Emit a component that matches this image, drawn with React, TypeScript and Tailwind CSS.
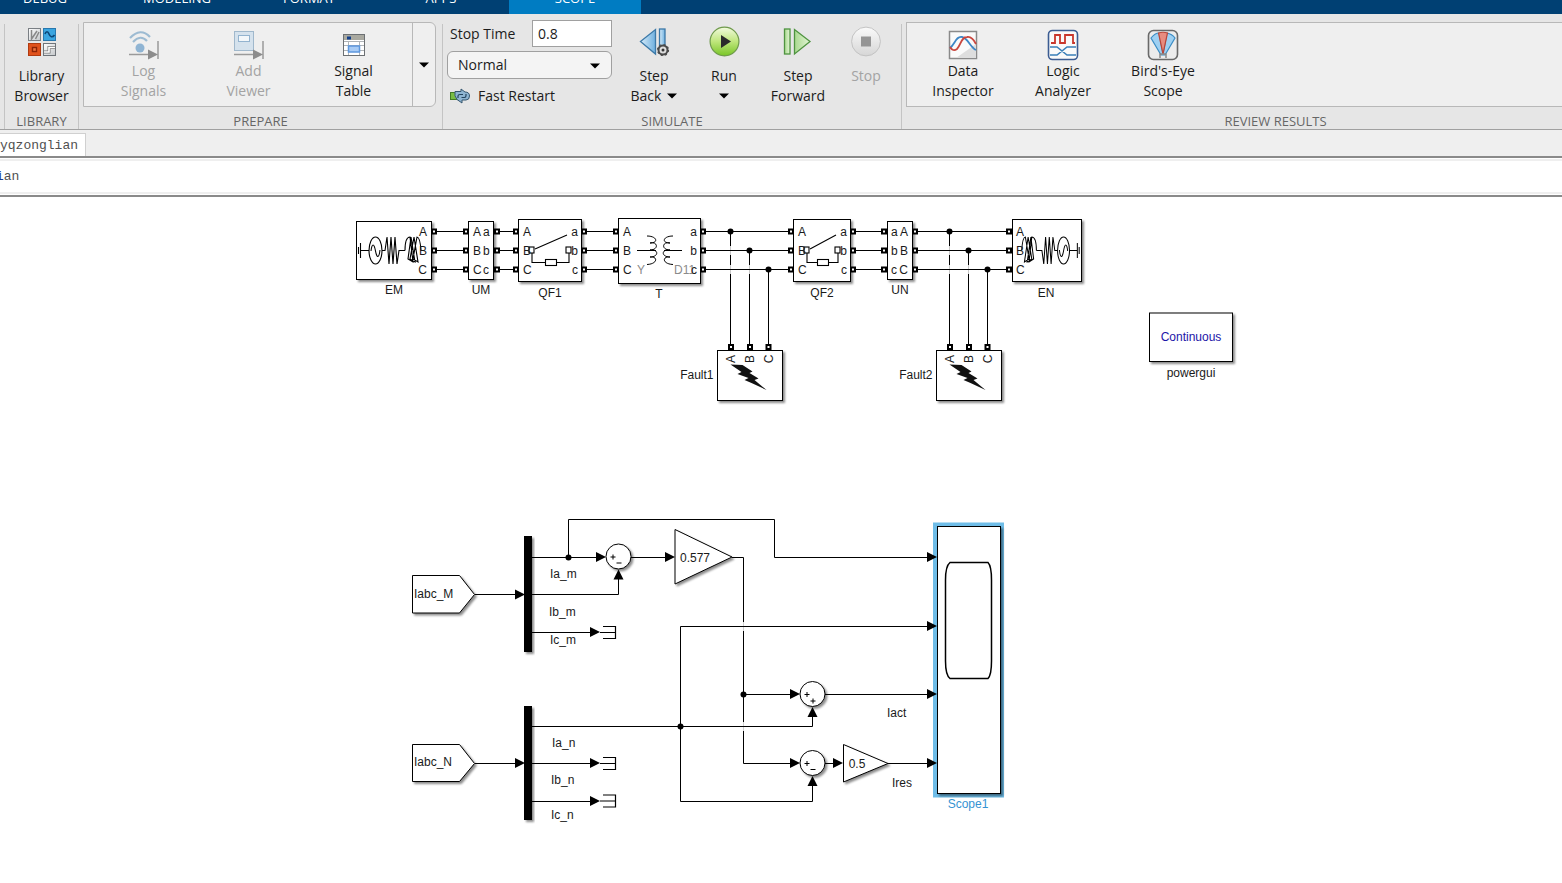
import { useState } from 'react';
import type { ReactNode } from 'react';

const TABS = ['DEBUG', 'MODELING', 'FORMAT', 'APPS', 'SCOPE'];

export default function App() {
  const [activeTab, setActiveTab] = useState('SCOPE');
  const [stopTime, setStopTime] = useState('0.8');
  const [mode, setMode] = useState('Normal');

  return (
    <div className="min-h-screen flex flex-col overflow-hidden bg-white font-['Open_Sans',sans-serif] text-sm leading-5 text-[#1c1c1c]">
      {/* Ribbon tabs */}
      <nav className="h-[14px] bg-[#004073] overflow-hidden flex items-end">
        <div className="flex -ml-[21px]">
          {TABS.map((tab) => (
            <button
              key={tab}
              onClick={() => setActiveTab(tab)}
              className={`h-8 pb-[6px] text-[13px] leading-5 text-white flex items-end justify-center ${
                activeTab === tab ? 'w-[132px] ml-[2px] bg-[#007cc2]' : 'w-[132px]'
              }`}
            >
              {tab}
            </button>
          ))}
        </div>
      </nav>

      {/* Toolstrip */}
      <header className="h-[116px] bg-[#e6e6e6] border-b border-[#a0a0a0] overflow-hidden flex">
        <div className="w-1 shrink-0" />
        <Divider />
        <Section title="LIBRARY" width="w-[73px]">
          <ToolButton icon={<LibraryIcon />} lines={['Library', 'Browser']} className="w-full pt-3" gap />
        </Section>

        <Divider />
        <Section title="PREPARE" width="w-[363px]">
          <div className="mt-2 ml-1 mr-[6px] h-[85px] flex border border-[#b8b8b8] rounded-r-md bg-[#efefef]">
            <div className="flex pl-[7px] pr-[6px] border-r border-[#b8b8b8]">
              <ToolButton icon={<LogIcon />} lines={['Log', 'Signals']} className="w-[105px] pt-[6px]" disabled />
              <ToolButton icon={<ViewerIcon />} lines={['Add', 'Viewer']} className="w-[105px] pt-[6px]" disabled />
              <ToolButton icon={<TableIcon />} lines={['Signal', 'Table']} className="w-[105px] pt-[6px]" />
            </div>
            <button aria-label="More tools" className="flex-1 flex items-center justify-center">
              <Caret />
            </button>
          </div>
        </Section>

        <Divider />
        <Section title="SIMULATE" width="w-[458px]">
          <div className="flex pl-1">
            <div className="w-[165px] pt-[6px] flex flex-col">
              <div className="flex items-center justify-between">
                <label htmlFor="stop-time" className="pl-[3px]">Stop Time</label>
                <input
                  id="stop-time"
                  value={stopTime}
                  onChange={(e) => setStopTime(e.target.value)}
                  className="w-20 h-[27px] px-[5px] bg-white border border-[#a0a0a0]"
                />
              </div>
              <div className="relative mt-1">
                <select
                  aria-label="Simulation mode"
                  value={mode}
                  onChange={(e) => setMode(e.target.value)}
                  className="appearance-none w-full h-7 pl-[10px] bg-[#f4f4f4] border border-[#a0a0a0] rounded-md"
                >
                  <option>Normal</option>
                  <option>Accelerator</option>
                  <option>Rapid Accelerator</option>
                </select>
                <span className="absolute right-3 top-3 pointer-events-none">
                  <Caret />
                </span>
              </div>
              <button className="mt-[7px] pl-[3px] flex items-center gap-2">
                <FastRestartIcon />
                Fast Restart
              </button>
            </div>
            <ToolButton icon={<StepBackIcon />} lines={['Step', 'Back']} className="ml-[7px] w-[70px] pt-3" gap caret />
            <ToolButton icon={<RunIcon />} lines={['Run', '']} className="w-[70px] pt-3" gap caret />
            <ToolButton icon={<StepForwardIcon />} lines={['Step', 'Forward']} className="w-[78px] pt-3" gap />
            <ToolButton icon={<StopIcon />} lines={['Stop']} className="w-[58px] pt-3" gap disabled />
          </div>
        </Section>

        <Divider />
        <Section title="REVIEW RESULTS" width="w-[747px]">
          <div className="mt-2 mx-1 h-[85px] px-[6px] flex border border-[#b8b8b8] bg-[#efefef]">
            <ToolButton icon={<InspectorIcon />} lines={['Data', 'Inspector']} className="w-[100px] pt-[6px]" />
            <ToolButton icon={<LogicIcon />} lines={['Logic', 'Analyzer']} className="w-[100px] pt-[6px]" />
            <ToolButton icon={<BirdsEyeIcon />} lines={["Bird's-Eye", 'Scope']} className="w-[100px] pt-[6px]" />
          </div>
        </Section>
      </header>

      {/* Model tab and breadcrumb */}
      <div className="h-7 pt-[3px] bg-[#efefef] border-b-2 border-[#8a8a8a] flex font-['Liberation_Mono',monospace] text-[13px] text-[#505050]">
        <button className="w-[86px] pt-[2px] bg-white border-r border-t border-[#d0d0d0] text-left">yqzonglian</button>
      </div>
      <div className="h-[39px] pt-px bg-white border-b-2 border-[#8a8a8a] font-['Liberation_Mono',monospace] text-[13px] text-[#505050]">
        <div className="h-[35px] border-y-2 border-[#efefef] flex items-center">
          <span className="-ml-1"><span className="text-[#1b3d8c]">i</span>an</span>
        </div>
      </div>

      <main className="flex-1 overflow-hidden">
        <Diagram />
      </main>
    </div>
  );
}

function Divider() {
  return <div className="w-px shrink-0 mt-[10px] bg-[#c4c4c4]" />;
}

function Section({ title, width, children }: { title: string; width: string; children: ReactNode }) {
  return (
    <section className={`${width} shrink-0 flex flex-col`}>
      <div className="flex-1">{children}</div>
      <h2 className="h-4 text-center text-[13px] leading-4 text-[#666]">{title}</h2>
    </section>
  );
}

interface ToolButtonProps {
  icon: ReactNode;
  lines: string[];
  className: string;
  gap?: boolean;
  disabled?: boolean;
  caret?: boolean;
}

function ToolButton({ icon, lines, className, gap, disabled, caret }: ToolButtonProps) {
  return (
    <button
      disabled={disabled}
      className={`flex flex-col items-center justify-start ${className} ${disabled ? 'text-[#a3a3a3]' : ''}`}
    >
      <span className={`h-8 flex items-center justify-center ${gap ? 'mb-2' : ''}`}>{icon}</span>
      {lines.map((line, i) => (
        <span key={i} className="h-5 flex items-center gap-[6px] whitespace-nowrap">
          {line}
          {caret && i === lines.length - 1 && <Caret />}
        </span>
      ))}
    </button>
  );
}

/* ---------- Toolstrip icons ---------- */

function Caret() {
  return (
    <svg width="10" height="6" viewBox="0 0 10 6" className="block">
      <path d="M0 0.5H10L5 5.5Z" fill="#000" />
    </svg>
  );
}

function LibraryIcon() {
  return (
    <svg width="30" height="30" viewBox="0 0 30 30" fill="none">
      <defs>
        <linearGradient id="tileGray" x1="0" y1="0" x2="1" y2="1">
          <stop offset="0" stopColor="#fff" />
          <stop offset="1" stopColor="#c4c7ca" />
        </linearGradient>
      </defs>
      <rect x="1.5" y="1.5" width="12" height="12" fill="url(#tileGray)" stroke="#7a7f84" />
      <path d="M4.500 3V12L10 4M8.500 12L12 5" stroke="#888" strokeWidth="1.5" />
      <rect x="16.5" y="1.5" width="12" height="12" fill="#3aa5e0" stroke="#2878ae" />
      <path d="M18 7C19 4 21 4 22 7S25.5 11 27.500 8" stroke="#0b4778" strokeWidth="1.6" />
      <rect x="1.5" y="16.5" width="12" height="12" fill="#e0521c" stroke="#b03a10" />
      <rect x="5.5" y="20.5" width="4" height="4" fill="#ef7440" stroke="#8c2406" strokeWidth="1.4" />
      <rect x="16.5" y="16.5" width="12" height="12" fill="url(#tileGray)" stroke="#6f7479" />
      <path d="M17 25H22V20.500H28" stroke="#777" strokeWidth="3" />
      <path d="M17 25H22V20.500H28" stroke="#fff" strokeWidth="1.6" />
    </svg>
  );
}

function LogIcon() {
  return (
    <svg width="32" height="32" viewBox="0 0 32 32" fill="none">
      <path d="M2 9Q12.5 -2 22 8" stroke="#9dbbd2" strokeWidth="2.2" />
      <path d="M5 13Q12.5 5 19 12" stroke="#9dbbd2" strokeWidth="2.2" />
      <circle cx="12" cy="19" r="4.5" fill="#8fb4d3" />
      <path d="M1 25.5H22M30 12V30" stroke="#9a9a9a" strokeWidth="1.5" />
      <path d="M20 20.5L30 25.5L20 30.5Z" fill="#8c8c8c" />
    </svg>
  );
}

function ViewerIcon() {
  return (
    <svg width="32" height="32" viewBox="0 0 32 32" fill="none">
      <rect x="1.5" y="2.5" width="19" height="19" fill="#d5e2ed" stroke="#a0b8cc" />
      <rect x="5.5" y="6.5" width="11" height="6" fill="#f3f7fa" stroke="#93b3cf" />
      <path d="M1 25.5H22M30 12V30" stroke="#9a9a9a" strokeWidth="1.5" />
      <path d="M20 20.5L30 25.5L20 30.5Z" fill="#8c8c8c" />
    </svg>
  );
}

function TableIcon() {
  return (
    <svg width="24" height="24" viewBox="0 0 24 24" fill="none">
      <rect x="1.5" y="1.5" width="21" height="21" fill="#fff" stroke="#6c7073" />
      <rect x="2" y="2" width="20" height="5" fill="#a9a9a0" />
      <rect x="5" y="3.500" width="4" height="3" fill="#123f8a" />
      <path d="M2 8.5H22M2 12.5H22M2 17.5H22M6.5 8V22M17.5 8V22" stroke="#b0b4b8" />
      <rect x="6.5" y="13" width="11" height="6" fill="#a8cbf5" stroke="#5d97dd" strokeWidth="1.5" />
    </svg>
  );
}

function FastRestartIcon() {
  return (
    <svg width="20" height="18" viewBox="0 0 20 18" fill="none">
      <rect x="0.5" y="5.5" width="6" height="7" fill="#79bd45" stroke="#437d26" />
      <path d="M5 4.500H11V2L15 5Q19.500 5 19.500 9T16 13H12V16L7 12.5Q4 9 5 4.500Z" fill="#8db4d2" stroke="#35566f" />
      <path d="M8 11V9Q8 7.500 10 7.500H13M11.500 10.500H14.500Q16 10.500 16 8.500V7" stroke="#23445e" strokeWidth="1.2" />
    </svg>
  );
}

function StepBackIcon() {
  return (
    <svg width="32" height="30" viewBox="0 0 32 30" fill="none">
      <defs>
        <linearGradient id="stepBlue">
          <stop offset="0" stopColor="#d7ecfa" />
          <stop offset="1" stopColor="#6fb0df" />
        </linearGradient>
      </defs>
      <path d="M17.5 2.5V27L2.5 14.5Z" fill="url(#stepBlue)" stroke="#3c79a8" strokeWidth="1.3" />
      <rect x="21.5" y="2" width="5.5" height="24" fill="url(#stepBlue)" stroke="#3c79a8" strokeWidth="1.3" />
      <circle cx="25" cy="23" r="4.5" fill="#ddd" stroke="#4b4b4b" strokeWidth="2" />
      <circle cx="25" cy="23" r="5.5" stroke="#4b4b4b" strokeWidth="1.2" strokeDasharray="2 2.3" />
      <circle cx="25" cy="23" r="1.5" fill="#333" />
    </svg>
  );
}

function RunIcon() {
  return (
    <svg width="32" height="32" viewBox="0 0 32 32">
      <defs>
        <linearGradient id="runGreen" x1="0" y1="0" x2="0" y2="1">
          <stop offset="0" stopColor="#f2fadf" />
          <stop offset="0.5" stopColor="#bfe67c" />
          <stop offset="1" stopColor="#78c526" />
        </linearGradient>
      </defs>
      <circle cx="16.500" cy="15.5" r="14.4" fill="url(#runGreen)" stroke="#6f9a4c" strokeWidth="1.2" />
      <path d="M13 9L23 15.5L13 22Z" fill="#2b2b2b" />
    </svg>
  );
}

function StepForwardIcon() {
  return (
    <svg width="30" height="30" viewBox="0 0 30 30">
      <defs>
        <linearGradient id="stepGreen">
          <stop offset="0" stopColor="#a9d98f" />
          <stop offset="1" stopColor="#e3f5d5" />
        </linearGradient>
      </defs>
      <rect x="1.5" y="2" width="5.5" height="25" fill="url(#stepGreen)" stroke="#4f9440" strokeWidth="1.3" />
      <path d="M11.5 2.5V27L27 14.5Z" fill="url(#stepGreen)" stroke="#4f9440" strokeWidth="1.3" />
    </svg>
  );
}

function StopIcon() {
  return (
    <svg width="32" height="32" viewBox="0 0 32 32">
      <defs>
        <linearGradient id="stopGray" x1="0" y1="0" x2="0" y2="1">
          <stop offset="0" stopColor="#fafafa" />
          <stop offset="1" stopColor="#d6d6d6" />
        </linearGradient>
      </defs>
      <circle cx="16" cy="15.5" r="14.4" fill="url(#stopGray)" stroke="#c3c3c3" />
      <rect x="11" y="10.5" width="10" height="10" fill="#959595" />
    </svg>
  );
}

function InspectorIcon() {
  return (
    <svg width="30" height="30" viewBox="0 0 30 30" fill="none">
      <rect x="1.5" y="1.5" width="27" height="27" fill="#fafafa" stroke="#8a8a8a" strokeWidth="1.5" />
      <path d="M28 28V14L8 28Z" fill="#dedede" />
      <path d="M2 18C7 14 8 6 14 7S22 17 28 20" stroke="#3d86c6" strokeWidth="1.8" />
      <path d="M2 17Q5 22 9 19C13 15 13 7 19 7Q24 6 28 14" stroke="#c9473f" strokeWidth="1.8" />
    </svg>
  );
}

function LogicIcon() {
  return (
    <svg width="32" height="32" viewBox="0 0 32 32" fill="none">
      <rect x="1.5" y="1.5" width="29" height="29" rx="4" fill="#fafafa" stroke="#3b5c92" strokeWidth="1.6" />
      <path d="M4 14H8V6H13V14H18V6H26V14H28" stroke="#c9372c" strokeWidth="1.8" />
      <path d="M3 18H10L20 26H29M3 26H10L20 18H29" stroke="#3a7fb8" strokeWidth="1.6" />
    </svg>
  );
}

function BirdsEyeIcon() {
  return (
    <svg width="32" height="32" viewBox="0 0 32 32" fill="none">
      <rect x="1.5" y="1.5" width="29" height="29" rx="5" fill="#ececec" stroke="#696969" strokeWidth="1.6" />
      <path d="M14 26L4 9Q8 4 12 4L16 25L20 4Q25 5 28 9L18 26Z" fill="#9ed0f2" stroke="#3a8cc4" strokeWidth="1.2" />
      <path d="M11.5 4Q16 2.5 20.5 4L16 25Z" fill="#e78c80" stroke="#b8463a" strokeWidth="1.2" />
      <path d="M13 29V25H19V29" stroke="#888" strokeWidth="1.5" />
    </svg>
  );
}

/* ---------- Block diagram ---------- */

const ROWS = [231.5, 250.5, 269.5];

// [from port x, to port x] for the three-phase bus
const BUS = [
  [434, 466],
  [497, 516],
  [584, 616],
  [703, 791],
  [853, 884],
  [915, 1009],
];

type Anchor = 'start' | 'middle' | 'end';

function Label({ x, y, children, anchor = 'middle', fill = '#1a1a1a' }: { x: number; y: number; children: string; anchor?: Anchor; fill?: string }) {
  return (
    <text x={x} y={y} textAnchor={anchor} fill={fill} stroke="none">
      {children}
    </text>
  );
}

function Box({ x, y, w, h }: { x: number; y: number; w: number; h: number }) {
  return <rect x={x} y={y} width={w} height={h} fill="#fff" filter="url(#shadow)" />;
}

function Port({ x, y }: { x: number; y: number }) {
  return <rect x={x - 2} y={y - 2} width="4" height="4" fill="#fff" strokeWidth="2" />;
}

function PortNames({ x, names, anchor = 'start' }: { x: number; names: string; anchor?: Anchor }) {
  return (
    <>
      {names.split('').map((name, i) => (
        <Label key={name} x={x} y={ROWS[i] + 4} anchor={anchor}>{name}</Label>
      ))}
    </>
  );
}

function ArrowRight({ x, y }: { x: number; y: number }) {
  return <path d={`M${x} ${y}l-10 -5v10z`} fill="#000" stroke="none" />;
}

function ArrowUp({ x, y }: { x: number; y: number }) {
  return <path d={`M${x} ${y}l-5 10h10z`} fill="#000" stroke="none" />;
}

function Dot({ x, y }: { x: number; y: number }) {
  return <circle cx={x} cy={y} r="3" fill="#000" stroke="none" />;
}

function Breaker({ x, w }: { x: number; w: number }) {
  const right = x + w;
  const mid = x + w / 2;
  return (
    <g strokeWidth="1.1">
      <path d={`M${x + 3} 253V262.5H${mid - 5}M${mid + 6} 262.5H${right - 3}V253M${x + 6} 249L${right - 5} 235`} />
      <rect x={x} y="247" width="5" height="6" />
      <rect x={right - 6} y="247" width="5" height="6" />
      <rect x={mid - 5} y="259.5" width="11" height="6" />
    </g>
  );
}

function SourceSymbol() {
  return (
    <g strokeWidth="1.1">
      <path d="M358.5 247V254M360.5 243V258M360.5 250.5H369" />
      <ellipse cx="375.5" cy="250.5" rx="6.5" ry="13.5" />
      <path d="M371 251C372 243 374 243 375.5 251S379 258 380 250M382 250.5H385L387 237L389 264L391 237L393 264L395 237L397 264L399 250.5H405" />
      <path d="M405 250.5C405 240 407 237 410 237L413 262L408 259L411 237L415 262L410 259L414 237L418 262L413 259L417 237Q420 237 421 250.5" />
    </g>
  );
}

function Fault({ x, name }: { x: number; name: string }) {
  return (
    <g transform={`translate(${x} 0)`}>
      <Box x={0} y={350.5} w={65} h={50} />
      {['A', 'B', 'C'].map((phase, i) => (
        <g key={phase}>
          <Port x={13.5 + i * 19 - (i === 2 ? 0.5 : 0)} y={347} />
          <text transform={`translate(${17.5 + i * 19} 359) rotate(-90)`} textAnchor="middle" fill="#1a1a1a" stroke="none">
            {phase}
          </text>
        </g>
      ))}
      <path
        d="M13 364.5L25 365L35 371.5L32 373L41 378.5L37 380L49 390L34 383L27 380L31 378L20 374L24 372Z"
        fill="#111"
        stroke="none"
      />
      <Label x={-4} y={379} anchor="end">{name}</Label>
    </g>
  );
}

function Sum({ x, y, second }: { x: number; y: number; second: '+' | '-' }) {
  return (
    <g>
      <circle cx={x} cy={y} r="12.5" fill="#fff" filter="url(#shadow)" />
      <path d={`M${x - 8} ${y + 0.5}h5M${x - 5.5} ${y - 2}v5`} />
      <path d={second === '+' ? `M${x - 2} ${y + 7}h5M${x + 0.5} ${y + 4.5}v5` : `M${x - 2} ${y + 6.5}h5`} />
    </g>
  );
}

function Terminator({ y }: { y: number }) {
  return <path d={`M603 ${y - 6}H615.5V${y + 6}H603M600 ${y}H615.5`} strokeWidth="1.2" />;
}

function Diagram() {
  return (
    <svg
      width="1562"
      height="684"
      viewBox="0 197 1562 684"
      className="block font-['Liberation_Sans',sans-serif] text-[12px]"
      fill="none"
      stroke="#000"
    >
      <defs>
        <filter id="shadow" x="-20%" y="-20%" width="150%" height="150%">
          <feDropShadow dx="2" dy="2" stdDeviation="1.2" floodOpacity="0.45" />
        </filter>
      </defs>

      {/* three-phase bus */}
      {BUS.map(([from, to]) => ROWS.map((y) => <path key={`${from}-${y}`} d={`M${from} ${y}H${to}`} />))}
      {[730.5, 949.5].map((x) => (
        <g key={x}>
          {ROWS.map((y, i) => (
            <g key={y}>
              <path d={`M${x + i * 19} ${y}V345`} />
              <Dot x={x + i * 19} y={y} />
            </g>
          ))}
          <path
            d={`M${x} 246V250M${x} 251V255M${x} 265V269M${x} 270V274M${x + 19} 265V269M${x + 19} 270V274`}
            stroke="#c8c8c8"
          />
        </g>
      ))}

      <Box x={356.5} y={221.5} w={75} h={58} />
      <SourceSymbol />
      <PortNames x={427} names="ABC" anchor="end" />
      <Label x={394} y={294}>EM</Label>

      <Box x={468.5} y={221.5} w={25} h={58} />
      <PortNames x={473} names="ABC" />
      <PortNames x={483} names="abc" />
      <Label x={481} y={294}>UM</Label>

      <Box x={518.5} y={219.5} w={63} h={62} />
      <Breaker x={529} w={43} />
      <PortNames x={523} names="ABC" />
      <PortNames x={578} names="abc" anchor="end" />
      <Label x={550} y={297}>QF1</Label>

      <Box x={618.5} y={218.5} w={82} h={65} />
      <path d="M647 236C657 236 659 243 650 243C658 241 659 250 650 250C659 249 659 257 650 257C658 256 658 264 647 264.5M637 250.5H656" />
      <path d="M673 236C663 236 661 243 670 243C662 241 661 250 670 250C661 249 661 257 670 257C662 256 662 264 673 264.5M664 250.5H682" />
      <Label x={637} y={274} anchor="start" fill="#8a8a8a">Y</Label>
      <Label x={674} y={274} anchor="start" fill="#8a8a8a">D11</Label>
      <PortNames x={623} names="ABC" />
      <PortNames x={697} names="abc" anchor="end" />
      <Label x={659} y={298}>T</Label>

      <Box x={793.5} y={219.5} w={57} h={62} />
      <Breaker x={804} w={37} />
      <PortNames x={798} names="ABC" />
      <PortNames x={847} names="abc" anchor="end" />
      <Label x={822} y={297}>QF2</Label>

      <Box x={887.5} y={221.5} w={25} h={58} />
      <PortNames x={891} names="abc" />
      <PortNames x={908} names="ABC" anchor="end" />
      <Label x={900} y={294}>UN</Label>

      <Box x={1012.5} y={219.5} w={69} h={62} />
      <g transform="matrix(-0.92 0 0 1 1409 0)">
        <SourceSymbol />
      </g>
      <PortNames x={1016} names="ABC" />
      <Label x={1046} y={297}>EN</Label>

      {BUS.flat().map((x) => ROWS.map((y) => <Port key={`${x}-${y}`} x={x} y={y} />))}

      <Fault x={717.5} name="Fault1" />
      <Fault x={936.5} name="Fault2" />

      <Box x={1149.5} y={313} w={83} h={48.5} />
      <Label x={1191} y={341} fill="#1c15a8">Continuous</Label>
      <Label x={1191} y={377}>powergui</Label>

      {/* signal lines */}
      <path d="M475 594.5H516M532 557.5H600M568.5 557.5V519.5H774.5V557.5H930M532 594.5H618.5V578M532 632.5H595M631 557.5H668M732 557.5H743.5V763.5H792" />
      <path d="M475 763.5H516M532 726.5H812.5V715M532 763.5H595M532 801.5H595M930 626.5H680.5V801.5H812.5V784M743.5 694.5H792M825 694.5H930M825 763.5H836M887 763.5H930" />
      {/* gaps where lines cross without a joint */}
      <path d="M743.5 622V626M743.5 627V631M743.5 722V726M743.5 727V731" stroke="#d0d0d0" />

      <Dot x={568.5} y={557.5} />
      <Dot x={680.5} y={726.5} />
      <Dot x={743.5} y={694.5} />

      <path d="M412.5 575.5H459.5L474.5 594.5L459.5 613H412.5Z" fill="#fff" filter="url(#shadow)" />
      <path d="M412.5 744.5H459.5L474.5 763.5L459.5 781.5H412.5Z" fill="#fff" filter="url(#shadow)" />
      <Label x={414} y={598} anchor="start">Iabc_M</Label>
      <Label x={414} y={766} anchor="start">Iabc_N</Label>

      <rect x="524" y="536" width="8" height="116" fill="#000" stroke="none" filter="url(#shadow)" />
      <rect x="524" y="706" width="8" height="114" fill="#000" stroke="none" filter="url(#shadow)" />

      <Sum x={618.5} y={556.5} second="-" />
      <Sum x={812.5} y={694} second="+" />
      <Sum x={812.5} y={763} second="-" />

      <path d="M675 529.5V584L732 557Z" fill="#fff" filter="url(#shadow)" />
      <path d="M843.5 744.5V782L888 763.5Z" fill="#fff" filter="url(#shadow)" />
      <Label x={695} y={562}>0.577</Label>
      <Label x={857} y={768}>0.5</Label>

      <Terminator y={632.5} />
      <Terminator y={763.5} />
      <Terminator y={801} />

      {/* selected scope */}
      <rect x="933" y="522.5" width="71" height="275" fill="#6fbde8" stroke="none" />
      <Box x={937.5} y={526.5} w={63} h={267} />
      <path
        d="M950 562.5H988Q991.5 566 991.5 580V661Q991.5 675 988 678.5H950Q945.5 675 945.5 661V580Q945.5 566 950 562.5Z"
        strokeWidth="1.5"
      />
      <Label x={968} y={808} fill="#3593d3">Scope1</Label>

      <ArrowRight x={525} y={594.5} />
      <ArrowRight x={606} y={557} />
      <ArrowRight x={600} y={632} />
      <ArrowRight x={675} y={557} />
      <ArrowRight x={525} y={763} />
      <ArrowRight x={600} y={763} />
      <ArrowRight x={600} y={801} />
      <ArrowRight x={800} y={694} />
      <ArrowRight x={800} y={763} />
      <ArrowRight x={843} y={763} />
      {[557, 626, 694, 763].map((y) => (
        <ArrowRight key={y} x={937} y={y} />
      ))}
      <ArrowUp x={618.5} y={569.5} />
      <ArrowUp x={812.5} y={707} />
      <ArrowUp x={812.5} y={776} />

      <Label x={550} y={578} anchor="start">Ia_m</Label>
      <Label x={549} y={616} anchor="start">Ib_m</Label>
      <Label x={550} y={644} anchor="start">Ic_m</Label>
      <Label x={552} y={747} anchor="start">Ia_n</Label>
      <Label x={551} y={784} anchor="start">Ib_n</Label>
      <Label x={551} y={819} anchor="start">Ic_n</Label>
      <Label x={887} y={717} anchor="start">Iact</Label>
      <Label x={892} y={787} anchor="start">Ires</Label>
    </svg>
  );
}
